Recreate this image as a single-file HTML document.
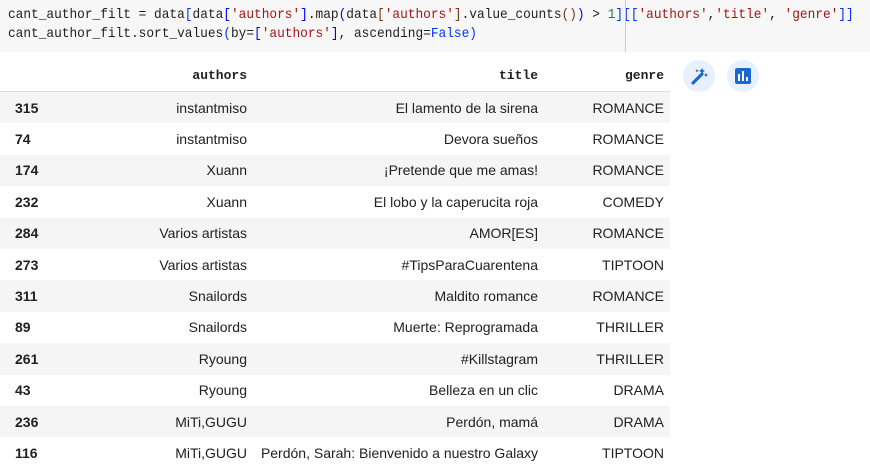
<!DOCTYPE html>
<html><head><style>
body{margin:0;width:870px;height:467px;background:#fff;overflow:hidden;position:relative;font-family:"Liberation Sans",Arial,sans-serif}
.code{position:absolute;left:0;top:0;width:870px;height:52px;background:#f7f7f7;overflow:hidden}
.code pre{margin:0;position:absolute;left:8px;top:6px;font:14px/19px "Liberation Mono",monospace;color:#212121;transform:scaleX(0.915);transform-origin:0 0}
.s{color:#a31515}.b{color:#0431fa}.k{color:#0000ff}.n{color:#098658}.p{color:#7b3814}
.cursor{position:absolute;left:625px;top:0;width:1px;height:52px;background:#ccc}
table{position:absolute;left:0;top:60px;border-collapse:collapse;font-size:14px;color:#212121}
th{font:bold 13px "Liberation Mono",monospace;text-align:right;height:31px;padding:0 6px;border-bottom:1px solid #ddd;color:#212121}
td{height:31.4px;padding:0 6px;text-align:right;white-space:nowrap}
td.i{text-align:left;font-weight:bold;padding-left:15px}
tr.g td{background:#f5f5f5}
.ic{position:absolute;top:60px;width:32px;height:32px;border-radius:50%;background:#e8f0fe}
</style></head><body>
<div class="code"><pre>cant_author_filt = data<span class="b">[</span>data<span class="k">[</span><span class="s">'authors'</span><span class="k">]</span>.map<span class="k">(</span>data<span class="p">[</span><span class="s">'authors'</span><span class="p">]</span>.value_counts<span class="p">()</span><span class="k">)</span> &gt; <span class="n">1</span><span class="b">][[</span><span class="s">'authors'</span>,<span class="s">'title'</span>, <span class="s">'genre'</span><span class="b">]]</span>
cant_author_filt.sort_values<span class="b">(</span>by=<span class="k">[</span><span class="s">'authors'</span><span class="k">]</span>, ascending=<span class="b">False</span><span class="b">)</span></pre></div>
<div class="cursor"></div>
<table>
<tr><th style="width:40px"></th><th style="width:189px">authors</th><th style="width:279px">title</th><th style="width:114px">genre</th></tr>
<tr class="g"><td class="i">315</td><td>instantmiso</td><td>El lamento de la sirena</td><td>ROMANCE</td></tr>
<tr><td class="i">74</td><td>instantmiso</td><td>Devora sueños</td><td>ROMANCE</td></tr>
<tr class="g"><td class="i">174</td><td>Xuann</td><td>¡Pretende que me amas!</td><td>ROMANCE</td></tr>
<tr><td class="i">232</td><td>Xuann</td><td>El lobo y la caperucita roja</td><td>COMEDY</td></tr>
<tr class="g"><td class="i">284</td><td>Varios artistas</td><td>AMOR[ES]</td><td>ROMANCE</td></tr>
<tr><td class="i">273</td><td>Varios artistas</td><td>#TipsParaCuarentena</td><td>TIPTOON</td></tr>
<tr class="g"><td class="i">311</td><td>Snailords</td><td>Maldito romance</td><td>ROMANCE</td></tr>
<tr><td class="i">89</td><td>Snailords</td><td>Muerte: Reprogramada</td><td>THRILLER</td></tr>
<tr class="g"><td class="i">261</td><td>Ryoung</td><td>#Killstagram</td><td>THRILLER</td></tr>
<tr><td class="i">43</td><td>Ryoung</td><td>Belleza en un clic</td><td>DRAMA</td></tr>
<tr class="g"><td class="i">236</td><td>MiTi,GUGU</td><td>Perdón, mamá</td><td>DRAMA</td></tr>
<tr><td class="i">116</td><td>MiTi,GUGU</td><td>Perdón, Sarah: Bienvenido a nuestro Galaxy</td><td>TIPTOON</td></tr>
</table>
<div class="ic" style="left:683px"><svg width="32" height="32" viewBox="0 0 32 32"><path d="M10 23 L19 14" stroke="#1967d2" stroke-width="3.2" stroke-linecap="round"/><path d="M19 8l1 2 2 1-2 1-1 2-1-2-2-1 2-1z M23 13l.7 1.3 1.3.7-1.3.7-.7 1.3-.7-1.3-1.3-.7 1.3-.7z M14 9l.6 1.2 1.2.6-1.2.6-.6 1.2-.6-1.2-1.2-.6 1.2-.6z" fill="#1967d2"/></svg></div>
<div class="ic" style="left:727px"><svg width="32" height="32" viewBox="0 0 32 32"><rect x="8" y="8" width="16" height="16" rx="2" fill="#1967d2"/><rect x="11" y="14" width="2" height="7" fill="#fff"/><rect x="15" y="11" width="2" height="10" fill="#fff"/><rect x="19" y="17" width="2" height="4" fill="#fff"/></svg></div>
</body></html>
